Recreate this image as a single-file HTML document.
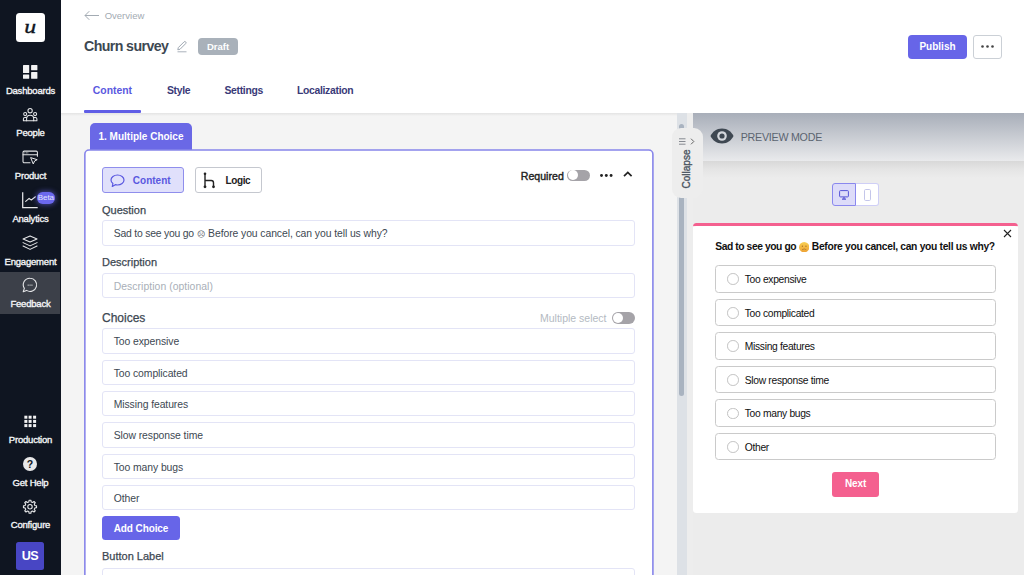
<!DOCTYPE html>
<html lang="en">
<head>
<meta charset="utf-8">
<title>Churn survey</title>
<style>
*{box-sizing:border-box;margin:0;padding:0}
html,body{width:1024px;height:575px;overflow:hidden;background:#f4f4f4;font-family:"Liberation Sans",sans-serif;-webkit-font-smoothing:antialiased}
.abs{position:absolute}
#side{position:absolute;left:0;top:0;width:61px;height:575px;background:#0f1521}
.nav{position:absolute;left:0;width:61px;text-align:center;color:#f4f5f7;font-size:9.5px;letter-spacing:-0.2px;line-height:12px;white-space:nowrap;-webkit-text-stroke:0.35px #f4f5f7}
.ico{position:absolute}
#head{position:absolute;left:61px;top:0;width:963px;height:113px;background:#fff}
.tab{position:absolute;top:84px;font-size:10.4px;letter-spacing:-0.3px;font-weight:bold;color:#3a3a78;line-height:14px;white-space:nowrap}
#left{position:absolute;left:61px;top:113px;width:616px;height:462px;background:#f4f4f4;overflow:hidden}
.lbl{position:absolute;left:102px;font-size:11px;color:#3d4852;line-height:14px;white-space:nowrap;-webkit-text-stroke:0.25px #3d4852}
.inp{position:absolute;left:102px;width:533.3px;height:25.4px;border:1px solid #e3e4f6;border-radius:3px;background:#fff;font-size:10.4px;letter-spacing:-0.08px;line-height:25.9px;padding-left:10.7px;color:#3d4852;white-space:nowrap;overflow:hidden}
#right{position:absolute;left:693px;top:113px;width:331px;height:462px;background:#ececec}
.opt{position:absolute;left:715.2px;width:280.8px;height:27.4px;border:1px solid #cacaca;border-radius:3.5px;background:#fff;font-size:10.3px;line-height:27px;color:#111;padding-left:28.600px;white-space:nowrap;letter-spacing:-0.32px}
.opt i{position:absolute;left:11.200px;top:7.300px;width:11.600px;height:11.600px;border:1px solid #c2c2c2;border-radius:50%}
</style>
</head>
<body>

<!-- ============ SIDEBAR ============ -->
<div id="side">
  <div class="abs" style="left:16px;top:13.200px;width:28.500px;height:28.800px;background:#fff;border-radius:3.500px"></div>
  <div class="abs" style="left:16px;top:12.300px;width:28.500px;height:29px;text-align:center;font-family:'Liberation Serif',serif;font-style:italic;font-size:19.500px;line-height:29px;color:#0f1521;-webkit-text-stroke:0.35px #0f1521;transform:scaleX(1.22)">u</div>

  <svg class="abs" style="left:0;top:0" width="61" height="575" viewBox="0 0 61 575" fill="none" stroke="#e6e7e9" stroke-width="1.05" stroke-linejoin="round" stroke-linecap="round">
    <g fill="#f2f2f3" stroke="none"><rect x="23" y="65" width="6.200" height="8" rx=".5"/><rect x="23" y="74.500" width="6.200" height="4.200" rx=".5"/><rect x="31.100" y="65" width="6.300" height="5.200" rx=".5"/><rect x="31.100" y="71.900" width="6.300" height="6.800" rx=".5"/></g>
    <circle cx="30.100" cy="110.700" r="2.150"/><circle cx="25.200" cy="114.100" r="1.550"/><circle cx="35.100" cy="114.100" r="1.550"/>
    <path d="M26.600 120.800v-2a3.550 3.550 0 0 1 7.100 0v2z"/><path d="M26.400 117.500h-1.500a1.500 1.500 0 0 0-1.500 1.500v1.800h3.200M33.900 117.500h1.500a1.500 1.500 0 0 1 1.500 1.500v1.800h-3.200"/>
    <path d="M30 162.800h-5.800a1.200 1.200 0 0 1-1.200-1.200v-9.300a1.200 1.200 0 0 1 1.200-1.200h12a1.200 1.200 0 0 1 1.200 1.200v4"/><path d="M23 154.700h14.400"/><path d="M24.800 152.900h.1M26.300 152.900h.1M27.800 152.900h.1" stroke-width=".9"/>
    <path d="M31 157.700l6.200 2-2.600 1.300-1.200 2.600z" stroke-width="1"/>
    <path d="M22.700 192.300v15.200h15" stroke-width="1.250" stroke-linecap="butt" stroke-linejoin="miter"/><path d="M25.700 201.400l3.400-3 2.200 1.600 4.100-3.200" stroke-width="1.100"/>
    <path d="M30.050 235.900l7 3-7 3.100-7-3.100z"/><path d="M23.050 242.600l7 3.300 7-3.300"/><path d="M23.050 246l7 3.400 7-3.400"/>
  </svg>
  <div class="nav" style="top:84.500px">Dashboards</div>

  <div class="nav" style="top:127px">People</div>

  <div class="nav" style="top:170px">Product</div>

  <div class="abs" style="left:37px;top:192.400px;width:17.800px;height:11.500px;border-radius:5.750px;background:#6b68ee;box-shadow:0 0 5px 1px rgba(107,104,238,.55);color:#e4e3ff;font-size:8px;line-height:11.500px;text-align:center;letter-spacing:-0.100px">Beta</div>
  <div class="nav" style="top:212.5px">Analytics</div>

  <div class="nav" style="top:255.5px">Engagement</div>

  <div class="abs" style="left:0;top:271.700px;width:60.200px;height:42.600px;background:#3c4049"></div>
  <svg class="abs" style="left:0;top:0" width="61" height="575" viewBox="0 0 61 575" fill="none" stroke="#e6e7e9" stroke-width="1.050" stroke-linejoin="round" stroke-linecap="round">
    <path stroke-width="1.1" d="M30.050 278.200a6.600 6.600 0 1 1-3.500 12.200l-3.300 1.300 1.100-3.300a6.600 6.600 0 0 1 5.700-10.200z"/>
    <g fill="#e6e7e9" stroke="none"><circle cx="28.150" cy="285.100" r=".65"/><circle cx="30.050" cy="285.100" r=".65"/><circle cx="31.950" cy="285.100" r=".65"/></g>
    <g fill="#f2f2f3" stroke="none"><rect x="24.35" y="415.7" width="3" height="3"/><rect x="28.6" y="415.7" width="3" height="3"/><rect x="33.1" y="415.7" width="3" height="3"/><rect x="24.35" y="419.9" width="3" height="3"/><rect x="28.6" y="419.9" width="3" height="3"/><rect x="33.1" y="419.9" width="3" height="3"/><rect x="24.35" y="424.1" width="3" height="3"/><rect x="28.6" y="424.1" width="3" height="3"/><rect x="33.1" y="424.1" width="3" height="3"/></g>
    <path d="M29.12 500.21 L30.88 500.21 L31.17 501.89 L32.61 502.49 L34.00 501.50 L35.25 502.75 L34.26 504.14 L34.86 505.58 L36.54 505.87 L36.54 507.63 L34.86 507.92 L34.26 509.36 L35.25 510.75 L34.00 512.00 L32.61 511.01 L31.17 511.61 L30.88 513.29 L29.12 513.29 L28.83 511.61 L27.39 511.01 L26.00 512.00 L24.75 510.75 L25.74 509.36 L25.14 507.92 L23.46 507.63 L23.46 505.87 L25.14 505.58 L25.74 504.14 L24.75 502.75 L26.00 501.50 L27.39 502.49 L28.83 501.89Z" stroke-width="1.100"/><circle cx="30" cy="506.750" r="2.200" stroke-width="1.100"/>
  </svg>
  <div class="nav" style="top:298px">Feedback</div>

  <div class="nav" style="top:434px">Production</div>

  <div class="abs" style="left:23.150px;top:457.100px;width:13.800px;height:13.800px;border-radius:50%;background:#e8e8e9;color:#0f1521;font-size:10.500px;font-weight:bold;line-height:14.200px;text-align:center">?</div>
  <div class="nav" style="top:476.5px">Get Help</div>

  <div class="nav" style="top:519px">Configure</div>

  <div class="abs" style="left:16.200px;top:541.600px;width:28px;height:28px;background:#4846c4;border-radius:2.500px;color:#fff;font-size:12.600px;font-weight:bold;line-height:28.600px;text-align:center;letter-spacing:-0.700px;text-indent:-0.700px">US</div>
</div>

<!-- ============ HEADER ============ -->
<div id="head">
  <svg class="abs" style="left:22.700px;top:9.850px" width="16" height="11" viewBox="0 0 16 11" fill="none" stroke="#a3abb3" stroke-width="1"><path d="M15 5.500H1M5.300 1.200L1 5.500l4.300 4.300"/></svg>
  <div class="abs" style="left:43.7px;top:9.5px;font-size:9.5px;line-height:12px;color:#a3abb3;white-space:nowrap">Overview</div>
  <div class="abs" style="left:23px;top:36px;font-size:14.2px;font-weight:bold;line-height:20px;color:#3d4852;white-space:nowrap;letter-spacing:-0.6px">Churn survey</div>
  <svg class="abs" style="left:115px;top:40px" width="12" height="13" viewBox="0 0 12 13" fill="none" stroke="#a0a9b3" stroke-width="1"><path d="M2.300 7.600L8 1.900a1.200 1.200 0 0 1 1.700 1.700L4 9.300l-2.200.5z" stroke-linejoin="round"/><path d="M1.500 11.800h9" stroke-width=".9"/></svg>
  <div class="abs" style="left:137px;top:38px;width:40px;height:17px;border-radius:4px;background:#a9b1ba;color:#fff;font-size:9.500px;font-weight:bold;line-height:17px;text-align:center">Draft</div>

  <div class="abs" style="left:847px;top:34.500px;width:59px;height:24px;border-radius:4px;background:#6765e8;color:#fff;font-size:10px;font-weight:bold;line-height:24px;text-align:center">Publish</div>
  <div class="abs" style="left:912px;top:34.500px;width:28.500px;height:24px;border-radius:3px;background:#fff;border:1px solid #cbd0d6"></div>
  <svg class="abs" style="left:920px;top:45px" width="13" height="3" viewBox="0 0 13 3" fill="#444"><circle cx="1.500" cy="1.500" r="1.300"/><circle cx="6.500" cy="1.500" r="1.300"/><circle cx="11.500" cy="1.500" r="1.300"/></svg>

  <div class="tab" style="left:31.800px;color:#5a58e0;letter-spacing:0">Content</div>
  <div class="tab" style="left:105.900px">Style</div>
  <div class="tab" style="left:163.400px">Settings</div>
  <div class="tab" style="left:235.900px">Localization</div>
  <div class="abs" style="left:23px;top:110px;width:57px;height:3px;background:#5f5de6;border-radius:1px"></div>
</div>
<div class="abs" style="left:61px;top:113px;width:963px;height:3px;background:linear-gradient(#e3e3e3,#f4f4f4)"></div>

<!-- ============ LEFT PANEL ============ -->
<div class="abs" style="left:90px;top:123px;width:102px;height:28px;border-radius:5px 5px 0 0;background:#6a68e6;color:#fff;font-size:10px;font-weight:bold;line-height:27px;text-align:center">1. Multiple Choice</div>
<svg class="abs" style="left:80px;top:145px" width="580" height="430" viewBox="80 145 580 430"><rect x="84.850" y="150" width="568.050" height="460" rx="4.200" fill="#fff" stroke="#8785ea" stroke-width="1.600"/></svg>

<div class="abs" style="left:102px;top:167px;width:82px;height:26px;border:1px solid #8f8eec;border-radius:3px;background:#e0e0fb"></div>
<svg class="abs" style="left:110.200px;top:173.700px" width="15" height="14" viewBox="0 0 15 14" fill="none" stroke="#5a58e0" stroke-width="1.200"><path d="M7.500 1C3.900 1 1 3.200 1 6c0 1.400.7 2.600 1.900 3.500L2.300 12.500l3-1.800c.7.200 1.400.3 2.200.3 3.600 0 6.500-2.200 6.500-5S11.100 1 7.500 1z" stroke-linejoin="round"/></svg>
<div class="abs" style="left:132.800px;top:174.400px;font-size:10px;font-weight:bold;line-height:14px;color:#5a58e0">Content</div>

<div class="abs" style="left:195px;top:167px;width:67px;height:26px;border:1px solid #c5c8cf;border-radius:3px;background:#fff"></div>
<svg class="abs" style="left:203px;top:172px" width="13" height="17" viewBox="0 0 13 17" fill="none" stroke="#222" stroke-width="1.200"><path d="M2 2v12M2 8.500h6.300a2.200 2.200 0 0 1 2.200 2.200V14" stroke-width="1.400"/><circle cx="2" cy="1.700" r="1.300" fill="#222" stroke="none"/><circle cx="2" cy="14.800" r="1.400" fill="#222" stroke="none"/><circle cx="10.500" cy="14.800" r="1.400" fill="#222" stroke="none"/></svg>
<div class="abs" style="left:225.600px;top:174.400px;font-size:10px;font-weight:bold;line-height:14px;color:#222;letter-spacing:-0.400px">Logic</div>

<div class="abs" style="left:520.800px;top:168.500px;font-size:10.600px;line-height:14px;color:#222;-webkit-text-stroke:0.400px #222">Required</div>
<div class="abs" style="left:567px;top:169.500px;width:23px;height:11.600px;border-radius:6px;background:#a5a3a8"></div>
<div class="abs" style="left:568px;top:170.400px;width:9.800px;height:9.800px;border-radius:50%;background:#fff"></div>
<svg class="abs" style="left:600px;top:174px" width="13" height="3" viewBox="0 0 13 3" fill="#222"><circle cx="1.500" cy="1.500" r="1.450"/><circle cx="6.300" cy="1.500" r="1.450"/><circle cx="11.100" cy="1.500" r="1.450"/></svg>
<svg class="abs" style="left:623px;top:170px" width="10" height="8" viewBox="0 0 10 8" fill="none" stroke="#222" stroke-width="1.700"><path d="M1 6.200l3.800-3.800 3.800 3.800"/></svg>

<div class="lbl" style="top:203px">Question</div>
<div class="inp" style="top:220.300px"><span style="letter-spacing:-0.21px">Sad to see you go</span><span style="font-size:8px;margin:0 3.500px 0 2.700px;vertical-align:0.5px;letter-spacing:0">&#9785;</span>Before you cancel, can you tell us why?</div>
<div class="lbl" style="top:255px">Description</div>
<div class="inp" style="top:273.100px;color:#a9afb8;letter-spacing:0.050px">Description (optional)</div>
<div class="lbl" style="top:310.500px;font-size:12px">Choices</div>
<div class="abs" style="left:540px;top:311px;font-size:10.500px;line-height:14px;color:#b4bac2;white-space:nowrap">Multiple select</div>
<div class="abs" style="left:612px;top:312px;width:23px;height:12px;border-radius:6px;background:#a5a3a8"></div>
<div class="abs" style="left:613px;top:313px;width:10px;height:10px;border-radius:50%;background:#fff"></div>

<div class="inp" style="top:328.400px">Too expensive</div>
<div class="inp" style="top:359.700px">Too complicated</div>
<div class="inp" style="top:391px">Missing features</div>
<div class="inp" style="top:422.200px">Slow response time</div>
<div class="inp" style="top:453.700px">Too many bugs</div>
<div class="inp" style="top:485px">Other</div>

<div class="abs" style="left:102px;top:516.200px;width:78px;height:24px;border-radius:3.500px;background:#6765e8;color:#fff;font-size:10px;font-weight:bold;line-height:25px;text-align:center;letter-spacing:-0.100px">Add Choice</div>
<div class="lbl" style="top:549px">Button Label</div>
<div class="inp" style="top:567.800px"></div>

<!-- scrollbar -->
<div class="abs" style="left:677px;top:113px;width:10px;height:462px;background:#dde1e6"></div>
<div class="abs" style="left:679px;top:124px;width:5px;height:272px;border-radius:3px;background:#a9b3c0"></div>
<div class="abs" style="left:687px;top:113px;width:6px;height:462px;background:#ededed"></div>

<!-- ============ RIGHT PANEL ============ -->
<div id="right"></div>
<div class="abs" style="left:693px;top:113px;width:331px;height:48px;background:linear-gradient(#a8aeb9,#e9eaec)"></div>
<div class="abs" style="left:693px;top:161px;width:331px;height:17px;background:linear-gradient(#d8d8d8,#e4e4e4 45%,#ececec)"></div>
<svg class="abs" style="left:710px;top:128px" width="24" height="16" viewBox="0 0 24 16"><path d="M12 .5C6.500.5 2.300 4 .5 8c1.800 4 6 7.500 11.500 7.500S21.700 12 23.500 8C21.700 4 17.500.5 12 .5z" fill="#3f4852"/><circle cx="12" cy="8" r="4.800" fill="#d5d8dd"/><circle cx="12" cy="8" r="2.600" fill="#3f4852"/></svg>
<div class="abs" style="left:740.700px;top:130.300px;font-size:10.700px;line-height:14px;color:#5b6470;white-space:nowrap;letter-spacing:-0.250px">PREVIEW MODE</div>

<!-- collapse pill -->
<div class="abs" style="left:671.500px;top:127.500px;width:31.500px;height:70.500px;border-radius:9px;background:#ededed"></div>
<svg class="abs" style="left:679px;top:137px" width="17" height="9" viewBox="0 0 17 9" fill="none" stroke="#7a7f87" stroke-width="0.900"><path d="M0 1.800h6.500M0 4.500h6.500M0 7.200h6.500"/><path d="M12 1.700l2.800 2.800-2.800 2.800" stroke="#555"/></svg>
<div class="abs" style="left:657px;top:162px;width:60px;height:14px;transform:rotate(-90deg);font-size:10px;line-height:14px;color:#4a5360;-webkit-text-stroke:0.350px #4a5360;text-align:center;white-space:nowrap">Collapse</div>

<!-- device toggle -->
<div class="abs" style="left:832px;top:183px;width:24px;height:23px;border:1px solid #8a88ee;border-radius:3px 0 0 3px;background:#dddcf9"></div>
<div class="abs" style="left:856px;top:183px;width:23.300px;height:23px;border:1px solid #cfcff6;border-left:none;border-radius:0 3px 3px 0;background:#fff"></div>
<svg class="abs" style="left:838.500px;top:190px" width="10" height="10" viewBox="0 0 10 10" fill="none" stroke="#5654d4" stroke-width="1"><rect x=".6" y=".6" width="8.800" height="6.300" rx=".8"/><path d="M3 9.200h4M5 7v2" stroke-width="1.200"/></svg>
<svg class="abs" style="left:864px;top:189px" width="7" height="12" viewBox="0 0 7 12" fill="none" stroke="#c4c6ea" stroke-width="1"><rect x=".5" y=".5" width="6" height="11" rx="1.200"/></svg>

<!-- preview card -->
<div class="abs" style="left:692.700px;top:222.800px;width:325.300px;height:290.500px;background:#fff;border-top:3px solid #f4608f;border-radius:3.500px"></div>
<svg class="abs" style="left:1003px;top:229px" width="9" height="9" viewBox="0 0 9 9" fill="none" stroke="#222" stroke-width="1.100"><path d="M1 1l7 7M8 1L1 8"/></svg>
<div class="abs" style="left:715.200px;top:240.300px;font-size:10.300px;font-weight:bold;line-height:14px;color:#111;white-space:nowrap;letter-spacing:-0.310px"><span style="letter-spacing:-0.42px">Sad to see you go</span><svg width="10.400" height="10.400" viewBox="0 0 20 20" style="vertical-align:-1.800px;margin:0 2.300px 0 2.900px"><defs><linearGradient id="eg" x1="0" y1="0" x2="0" y2="1"><stop offset="0" stop-color="#f8cf52"/><stop offset="1" stop-color="#eea236"/></linearGradient></defs><circle cx="10" cy="10" r="10" fill="url(#eg)"/><circle cx="6.600" cy="8" r="1.250" fill="#a06a22"/><circle cx="13.400" cy="8" r="1.250" fill="#a06a22"/><path d="M6.500 14.400q3.500-2.600 7 0" fill="none" stroke="#a06a22" stroke-width="1.200" stroke-linecap="round"/></svg>Before you cancel, can you tell us why?</div>

<div class="opt" style="top:265.2px"><i></i>Too expensive</div>
<div class="opt" style="top:298.7px"><i></i>Too complicated</div>
<div class="opt" style="top:332.2px"><i></i>Missing features</div>
<div class="opt" style="top:365.8px"><i></i>Slow response time</div>
<div class="opt" style="top:399.3px"><i></i>Too many bugs</div>
<div class="opt" style="top:432.8px"><i></i>Other</div>

<div class="abs" style="left:832.300px;top:472px;width:46.500px;height:24.500px;border-radius:3px;background:#f4608f;color:#fff;font-size:10px;font-weight:bold;line-height:24.500px;text-align:center;letter-spacing:-0.100px">Next</div>

</body>
</html>
